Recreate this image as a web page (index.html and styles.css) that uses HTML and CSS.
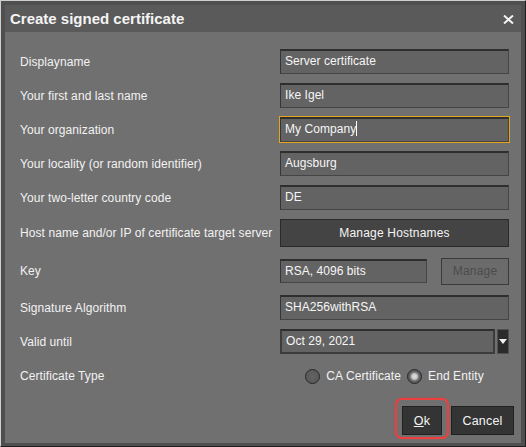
FILE: index.html
```html
<!DOCTYPE html>
<html>
<head>
<meta charset="utf-8">
<link rel="stylesheet" href="styles.css">
</head>
<body>
<div class="window">
  <div class="titlebar">
    <span class="title">Create signed certificate</span>
    <svg class="close" width="11" height="9" viewBox="0 0 11 9"><path d="M1 0.5 L10 8.5 M10 0.5 L1 8.5" stroke="#f2f2f2" stroke-width="2" fill="none"/></svg>
  </div>
  <div class="content">
    <div class="row">
      <div class="label">Displayname</div>
      <div class="field">Server certificate</div>
    </div>
    <div class="row">
      <div class="label">Your first and last name</div>
      <div class="field">Ike Igel</div>
    </div>
    <div class="row">
      <div class="label">Your organization</div>
      <div class="field focused">My Company<span class="caret"></span></div>
    </div>
    <div class="row">
      <div class="label">Your locality (or random identifier)</div>
      <div class="field">Augsburg</div>
    </div>
    <div class="row">
      <div class="label">Your two-letter country code</div>
      <div class="field">DE</div>
    </div>
    <div class="row tall">
      <div class="label">Host name and/or IP of certificate target server</div>
      <div class="btn wide">Manage Hostnames</div>
    </div>
    <div class="row tall">
      <div class="label">Key</div>
      <div class="control split">
        <div class="field key">RSA, 4096 bits</div>
        <div class="btn disabled">Manage</div>
      </div>
    </div>
    <div class="row">
      <div class="label">Signature Algorithm</div>
      <div class="field">SHA256withRSA</div>
    </div>
    <div class="row">
      <div class="label">Valid until</div>
      <div class="control split">
        <div class="field date">Oct 29, 2021</div>
        <div class="drop"><svg width="8" height="5" viewBox="0 0 8 5"><path d="M0 0 H8 L4 5 Z" fill="#f0f0f0"/></svg></div>
      </div>
    </div>
    <div class="row radios">
      <div class="label">Certificate Type</div>
      <div class="control radio-group">
        <span class="radio"></span><span class="rlabel">CA Certificate</span>
        <span class="radio checked"></span><span class="rlabel">End Entity</span>
      </div>
    </div>
    <div class="footer">
      <div class="okwrap">
        <div class="btn action"><span class="u">O</span>k</div>
        <div class="highlight"></div>
      </div>
      <div class="btn action cancel">Cancel</div>
    </div>
  </div>
</div>
</body>
</html>
```
FILE: styles.css
```css
html, body {
  margin: 0;
  padding: 0;
  background: #6f6f6f;
}
body {
  font-family: "Liberation Sans", Arial, sans-serif;
  font-size: 12px;
  color: #f2f2f2;
}
.window {
  width: 526px;
  height: 447px;
  box-sizing: border-box;
  border-top: 1px solid #cfcfcf;
  border-left: 1px solid #cfcfcf;
  border-right: 1px solid #1e1e1e;
  border-bottom: 1px solid #1e1e1e;
  padding: 4px 4px 3px 4px;
  background: #4f4f4f;
  display: flex;
  flex-direction: column;
}
.titlebar {
  height: 27px;
  flex: none;
  background: #5a5a5a;
  display: flex;
  align-items: center;
  justify-content: space-between;
  padding: 0 7px 0 5px;
}
.title {
  font-weight: bold;
  font-size: 15px;
  color: #f4f4f4;
  letter-spacing: 0;
}
.close {
  display: block;
  margin-top: 1px;
}
.content {
  flex: 1;
  background: #707070;
  padding: 17px 12px 0 15px;
  display: flex;
  flex-direction: column;
}
.row {
  display: flex;
  align-items: center;
  height: 25px;
  margin-bottom: 9px;
}
.row.tall {
  height: 28px;
  margin-bottom: 10px;
}
.row.radios {
  height: 20px;
  margin-top: 3px;
  margin-bottom: 0;
}
.label {
  width: 260px;
  flex: none;
  letter-spacing: 0.08px;
}
.field {
  width: 229px;
  height: 25px;
  box-sizing: border-box;
  background: #636363;
  border: 1px solid #454545;
  border-top: 2px solid #2e2e2e;
  border-left-color: #353535;
  padding: 0 4px;
  line-height: 21px;
  color: #f6f6f6;
  letter-spacing: 0.05px;
  white-space: nowrap;
}
.field.focused {
  outline: 1px solid #e3a51c;
}
.caret {
  display: inline-block;
  width: 1px;
  height: 15px;
  background: #ffffff;
  vertical-align: -3px;
}
.control {
  width: 229px;
  flex: none;
}
.split {
  display: flex;
  align-items: center;
  justify-content: space-between;
}
.field.key {
  width: 147px;
  height: 24px;
}
.field.date {
  width: 215px;
  border: 2px solid #3c3c3c;
  border-top-color: #2e2e2e;
  line-height: 21px;
}
.drop {
  width: 12px;
  height: 25px;
  box-sizing: border-box;
  background: #2b2b2b;
  border: 1px solid #505050;
  display: flex;
  align-items: center;
  justify-content: center;
}
.drop svg {
  display: block;
}
.btn {
  box-sizing: border-box;
  background: #444444;
  border: 1px solid #2a2a2a;
  color: #f4f4f4;
  display: flex;
  align-items: center;
  justify-content: center;
  font-size: 12px;
  letter-spacing: 0.2px;
}
.btn.wide {
  width: 229px;
  height: 28px;
}
.btn.disabled {
  width: 68px;
  height: 27px;
  background: #6b6b6b;
  border: 1px solid #3a3a3a;
  color: #4c4c4c;
}
.radio-group {
  display: flex;
  align-items: center;
  justify-content: center;
}
.radio {
  width: 15px;
  height: 15px;
  box-sizing: border-box;
  border-radius: 50%;
  border: 1.5px solid #262626;
  background: radial-gradient(circle at 50% 50%, #636363 0, #5a5a5a 70%);
  flex: none;
  margin-right: 6px;
  position: relative;
}
.radio.checked {
  margin-left: 6px;
  background: radial-gradient(circle at 50% 50%, #e2e2e2 0, #c4c4c4 30%, #8a8a8a 42%, #5e5e5e 55%);
}
.rlabel {
  font-size: 12px;
  letter-spacing: 0.1px;
}
.footer {
  display: flex;
  justify-content: flex-end;
  margin-top: 20px;
  margin-right: -5px;
  gap: 9px;
}
.okwrap {
  position: relative;
}
.btn.action {
  height: 29px;
  background: #343434;
  border: 1px solid #202020;
  font-size: 12.5px;
}
.okwrap .btn {
  width: 40px;
}
.btn.cancel {
  width: 63px;
}
.u {
  text-decoration: underline;
}
.highlight {
  position: absolute;
  left: -7px;
  right: -7px;
  top: -8px;
  bottom: -4px;
  border: 2.5px solid #ee3f3f;
  border-radius: 7px;
  box-shadow: 0 0 2px rgba(238, 63, 63, 0.6);
}
```
